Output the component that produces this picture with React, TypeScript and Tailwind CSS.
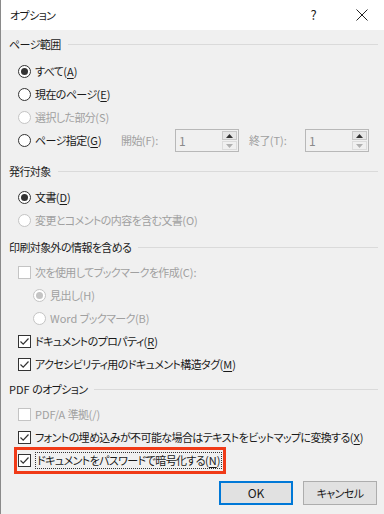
import React from 'react';

const Key = ({ k }: { k: string }) => (
  <span className="tracking-normal">
    (<span className="underline underline-offset-2">{k}</span>)
  </span>
);

const L = ({ children }: { children: React.ReactNode }) => <span className="tracking-normal">{children}</span>;

const Radio = ({ checked = false, disabled = false }: { checked?: boolean; disabled?: boolean }) => (
  <span
    className={`flex h-[13px] w-[13px] shrink-0 items-center justify-center rounded-full border bg-white ${
      disabled ? 'border-[#c4c4c4]' : 'border-[#333333]'
    }`}
  >
    {checked && (
      <span className={`h-[7px] w-[7px] rounded-full ${disabled ? 'bg-[#c4c4c4]' : 'bg-[#333333]'}`} />
    )}
  </span>
);

const Check = ({ checked = false, disabled = false }: { checked?: boolean; disabled?: boolean }) => (
  <span
    className={`flex h-[13px] w-[13px] shrink-0 items-center justify-center border bg-white ${
      disabled ? 'border-[#c4c4c4]' : 'border-[#333333]'
    }`}
  >
    {checked && (
      <svg width="11" height="11" viewBox="0 0 11 11">
        <path d="M1.5 5.5 L4.2 8.2 L9.5 2.5" fill="none" stroke="#333" strokeWidth="1.2" />
      </svg>
    )}
  </span>
);

const Header = ({ children }: { children: React.ReactNode }) => (
  <div className="flex h-[18px] items-center gap-[7px] pl-[8px] pr-[6px] text-[#1a1a1a]">
    <span className="whitespace-nowrap">{children}</span>
    <div className="h-px flex-1 bg-[#dadada]" />
  </div>
);

const Row = ({ children, className = '' }: { children: React.ReactNode; className?: string }) => (
  <div className={`flex h-[23px] items-center gap-[4px] whitespace-nowrap ${className}`}>{children}</div>
);

const Spin = () => (
  <div className="flex h-[23px] w-[64px] items-stretch border border-[#b8b8b8] bg-[#f0f0f0]">
    <span className="flex flex-1 items-center pl-[3px] text-[12px] text-[#8a8a8a]">1</span>
    <div className="flex w-[16px] flex-col gap-px py-px pr-px">
      <span className="flex flex-1 items-center justify-center border border-[#c8c8c8] bg-[#e6e6e6]">
        <svg width="7" height="4" viewBox="0 0 7 4"><path d="M0 4 L3.5 0 L7 4Z" fill="#333" /></svg>
      </span>
      <span className="flex flex-1 items-center justify-center border border-[#dcdcdc] bg-[#f0f0f0]">
        <svg width="7" height="4" viewBox="0 0 7 4"><path d="M0 0 L3.5 4 L7 0Z" fill="#b0b0b0" /></svg>
      </span>
    </div>
  </div>
);

export default function App() {
  const dim = 'text-[#a0a0a0]';
  return (
    <div className="flex h-[514px] w-[384px] flex-col border-l border-[#8a8a8a] bg-[#f0f0f0] font-['Noto_Sans_CJK_JP','Noto_Sans',sans-serif] text-[11px] tracking-[-0.6px] text-[#1a1a1a] [font-feature-settings:'palt']">
      {/* title bar */}
      <div className="flex h-[30px] items-center bg-white pl-[9px]">
        <span className="flex-1">オプション</span>
        <span className="mr-[40px] text-[13px]">?</span>
        <svg width="12" height="12" viewBox="0 0 12 12" className="mr-[16px]">
          <path d="M0.5 0.5 L11.5 11.5 M11.5 0.5 L0.5 11.5" stroke="#222" strokeWidth="1" />
        </svg>
      </div>

      <div className="flex flex-1 flex-col pt-[5px]">
        <Header>ページ範囲</Header>
        <div className="mt-[7px] flex flex-col pl-[17px]">
          <Row><Radio checked /><span>すべて<Key k="A" /></span></Row>
          <Row><Radio /><span>現在のページ<Key k="E" /></span></Row>
          <Row className={dim}><Radio disabled /><span>選択した部分<L>(S)</L></span></Row>
          <Row>
            <Radio />
            <span className="w-[82px]">ページ指定<Key k="G" /></span>
            <span className={`w-[50px] ${dim}`}>開始<L>(F):</L></span>
            <Spin />
            <span className={`ml-[6px] w-[52px] ${dim}`}>終了<L>(T):</L></span>
            <Spin />
          </Row>
        </div>

        <div className="mt-[10px]"><Header>発行対象</Header></div>
        <div className="mt-[6px] flex flex-col pl-[17px]">
          <Row><Radio checked /><span>文書<Key k="D" /></span></Row>
          <Row className={dim}><Radio disabled /><span>変更とコメントの内容を含む文書<L>(O)</L></span></Row>
        </div>

        <div className="mt-[6px]"><Header>印刷対象外の情報を含める</Header></div>
        <div className="mt-[5px] flex flex-col pl-[17px]">
          <Row className={dim}><Check disabled /><span>次を使用してブックマークを作成<L>(C):</L></span></Row>
          <Row className={`${dim} pl-[15px]`}><Radio checked disabled /><span>見出し<L>(H)</L></span></Row>
          <Row className={`${dim} pl-[15px]`}><Radio disabled /><span><L>Word </L>ブックマーク<L>(B)</L></span></Row>
          <Row><Check checked /><span>ドキュメントのプロパティ<Key k="R" /></span></Row>
          <Row><Check checked /><span>アクセシビリティ用のドキュメント構造タグ<Key k="M" /></span></Row>
        </div>

        <div className="mt-[4px]"><Header><L>PDF </L>のオプション</Header></div>
        <div className="mt-[5px] flex flex-col pl-[17px]">
          <Row className={dim}><Check disabled /><span><L>PDF/A </L>準拠<L>(/)</L></span></Row>
          <Row><Check checked /><span>フォントの埋め込みが不可能な場合はテキストをビットマップに変換する<Key k="X" /></span></Row>
          <div className="flex">
            <div className="relative">
              <Row>
                <Check checked />
                <span className="border border-dotted border-[#333] px-px leading-[15px]">ドキュメントをパスワードで暗号化する<Key k="N" /></span>
              </Row>
              <div className="pointer-events-none absolute -bottom-[2px] -left-[4px] -right-[4px] -top-[2px] border-[3px] border-[#f03a17]" />
            </div>
          </div>
        </div>

        <div className="mt-[9px] flex justify-end gap-[10px] pr-[7px]">
          <button className="h-[24px] w-[74px] border-2 border-[#0078d7] bg-[#e1e1e1] text-[12px] tracking-normal">OK</button>
          <button className="h-[24px] w-[74px] border border-[#adadad] bg-[#e1e1e1]">キャンセル</button>
        </div>
      </div>
    </div>
  );
}
